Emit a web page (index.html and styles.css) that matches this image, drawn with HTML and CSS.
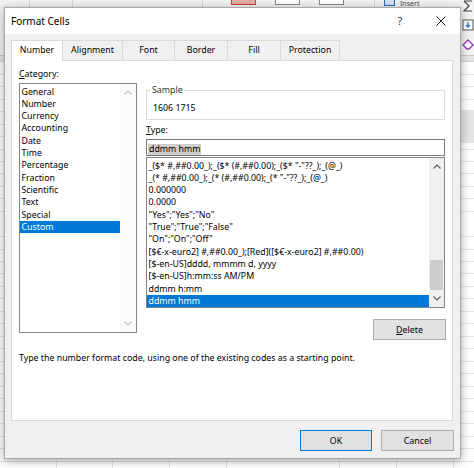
FILE: index.html
```html
<!DOCTYPE html>
<html lang="en">
<head>
<meta charset="utf-8">
<title>Format Cells</title>
<link rel="stylesheet" href="styles.css">
</head>
<body>
<div class="app">
  <div class="ribbon">
    <div class="rgroup g1"></div>
    <div class="rgroup g2"></div>
    <div class="rgroup g3"></div>
    <div class="rgroup g4">
      <span class="ricon red"></span>
      <span class="ricon grid"></span>
      <span class="ricon grid"></span>
    </div>
    <div class="rgroup g5"><span class="ricon blue"></span><span class="rtext">Insert</span></div>
    <div class="rside">
      <svg class="sicon" viewBox="0 0 12 12" width="12" height="12"><path d="M2 1h8M2 1l5 5-5 5h8" fill="none" stroke="#444" stroke-width="1.2"/></svg>
      <svg class="sicon" viewBox="0 0 12 12" width="12" height="12"><rect x="1" y="1" width="10" height="10" fill="#fff" stroke="#555"/><path d="M6 3v5M4 6l2 2 2-2" fill="none" stroke="#2b79d0" stroke-width="1.3"/></svg>
      <svg class="sicon" viewBox="0 0 12 12" width="12" height="12"><path d="M1 7l5-5 5 5-4 4H5z" fill="#fff" stroke="#9b3fbf" stroke-width="1.4"/></svg>
    </div>
  </div>
  <div class="colhead"></div>
  <div class="sheet"></div>
</div>

<div class="dialog">
  <div class="titlebar">
    <span class="title">Format Cells</span>
    <span class="help">?</span>
    <span class="close"><svg viewBox="0 0 10 10" width="10" height="10"><path d="M0.5 0.5l9 9M9.5 0.5l-9 9" stroke="#222" stroke-width="1" fill="none"/></svg></span>
  </div>
  <div class="body">
    <div class="tabs">
      <div class="tab active">Number</div>
      <div class="tab t2">Alignment</div>
      <div class="tab t3">Font</div>
      <div class="tab t4">Border</div>
      <div class="tab t5">Fill</div>
      <div class="tab t6">Protection</div>
    </div>
    <div class="panel">
      <div class="cols">
        <div class="left">
          <div class="lbl"><u>C</u>ategory:</div>
          <div class="listbox cat">
            <ul class="items">
              <li>General</li>
              <li>Number</li>
              <li>Currency</li>
              <li>Accounting</li>
              <li>Date</li>
              <li>Time</li>
              <li>Percentage</li>
              <li>Fraction</li>
              <li>Scientific</li>
              <li>Text</li>
              <li>Special</li>
              <li class="selected">Custom</li>
            </ul>
            <div class="vscroll off">
              <svg class="arr" viewBox="0 0 8 5" width="8" height="5"><path d="M0.5 4.5l3.5-3.5 3.5 3.5" fill="none" stroke="#c4c4c4" stroke-width="1.2"/></svg>
              <span class="track"></span>
              <svg class="arr" viewBox="0 0 8 5" width="8" height="5"><path d="M0.5 0.5l3.5 3.5 3.5-3.5" fill="none" stroke="#c4c4c4" stroke-width="1.2"/></svg>
            </div>
          </div>
        </div>
        <div class="right">
          <fieldset class="sample">
            <legend>Sample</legend>
            <div class="sval">1606 1715</div>
          </fieldset>
          <div class="lbl type"><u>T</u>ype:</div>
          <div class="input"><span class="sel">ddmm hmm</span></div>
          <div class="listbox codes">
            <ul class="items">
              <li>_($* #,##0.00_);_($* (#,##0.00);_($* "-"??_);_(@_)</li>
              <li>_(* #,##0.00_);_(* (#,##0.00);_(* "-"??_);_(@_)</li>
              <li>0.000000</li>
              <li>0.0000</li>
              <li>"Yes";"Yes";"No"</li>
              <li>"True";"True";"False"</li>
              <li>"On";"On";"Off"</li>
              <li>[$€-x-euro2] #,##0.00_);[Red]([$€-x-euro2] #,##0.00)</li>
              <li>[$-en-US]dddd, mmmm d, yyyy</li>
              <li>[$-en-US]h:mm:ss AM/PM</li>
              <li>ddmm h:mm</li>
              <li class="selected">ddmm hmm</li>
            </ul>
            <div class="vscroll on">
              <svg class="arr" viewBox="0 0 8 5" width="8" height="5"><path d="M0.5 4.5l3.5-3.5 3.5 3.5" fill="none" stroke="#606060" stroke-width="1.2"/></svg>
              <span class="track"><span class="thumb"></span></span>
              <svg class="arr" viewBox="0 0 8 5" width="8" height="5"><path d="M0.5 0.5l3.5 3.5 3.5-3.5" fill="none" stroke="#606060" stroke-width="1.2"/></svg>
            </div>
          </div>
          <div class="delrow"><button class="btn del"><u>D</u>elete</button></div>
        </div>
      </div>
      <p class="hint">Type the number format code, using one of the existing codes as a starting point.</p>
    </div>
    <div class="footer">
      <button class="btn ok">OK</button>
      <button class="btn cancel">Cancel</button>
    </div>
  </div>
</div>
</body>
</html>
```

FILE: styles.css
```css
* { box-sizing: border-box; }
html, body {
  margin: 0;
  padding: 0;
  width: 474px;
  height: 468px;
  overflow: hidden;
}
body {
  font-family: "Noto Sans", "Open Sans", "DejaVu Sans", sans-serif;
  font-size: 8.8px;
  color: #000;
  background: #fff;
  position: relative;
}

/* ---------- background application ---------- */
.app {
  display: flex;
  flex-direction: column;
  width: 474px;
  height: 468px;
}
.ribbon {
  height: 55px;
  background: #f3f3f3;
  display: flex;
  align-items: flex-start;
  flex: none;
}
.rgroup {
  height: 8px;
  border-right: 1px solid #d6d6d6;
  display: flex;
  align-items: flex-start;
  flex: none;
}
.g1 { width: 30px; }
.g2 { width: 43px; }
.g3 { width: 130px; }
.g4 { width: 172px; padding-left: 28px; gap: 19px; }
.g5 { width: 70px; border-right: none; padding-left: 9px; gap: 5px; }
.ricon {
  width: 25px;
  height: 5px;
  border: 1px solid #8a8a8a;
  border-top: none;
  background: #fff;
  flex: none;
}
.ricon.red { border-color: #c9453a; background: #e4a9a4; }
.ricon.blue { width: 11px; height: 6px; border-color: #2b6cb8; background: #cfe0f4; }
.rtext {
  font-size: 7px;
  line-height: 7px;
  color: #444;
}
.rside {
  margin-left: auto;
  width: 13px;
  display: flex;
  flex-direction: column;
  gap: 7px;
  align-items: center;
}
.sicon { display: block; }
.colhead {
  height: 7px;
  background: #e6e6e6;
  border-top: 1px solid #c8c8c8;
  border-bottom: 1px solid #d0d0d0;
  flex: none;
}
.sheet {
  flex: 1;
  background-color: #fff;
  background-image:
    linear-gradient(#e4e4e4, #e4e4e4),
    repeating-linear-gradient(to bottom, transparent 0 11.5px, #e2e2e2 11.5px 12.5px),
    repeating-linear-gradient(to right, transparent 0 55.7px, #e2e2e2 55.7px 56.7px);
  background-size: 13px 33px, auto, auto;
  background-position: right 0 top 48px, 0 0, 0 0;
  background-repeat: no-repeat, repeat, repeat;
}

/* ---------- dialog ---------- */
.dialog {
  position: absolute;
  left: 4px;
  top: 7px;
  width: 457px;
  height: 452px;
  background: #f0f0f0;
  border: 1px solid #a9a9a9;
  box-shadow: 0 2px 9px rgba(0, 0, 0, 0.35);
  display: flex;
  flex-direction: column;
}
.titlebar {
  height: 26px;
  background: #fff;
  display: flex;
  align-items: center;
  padding-left: 6px;
  flex: none;
}
.title {
  font-size: 10px;
  flex: 1;
  padding-bottom: 1px;
}
.help {
  font-size: 11px;
  color: #333;
  width: 12px;
  text-align: center;
  margin-right: 30px;
  padding-bottom: 1px;
}
.close {
  width: 10px;
  height: 10px;
  margin-right: 14px;
  display: flex;
}
.close svg { display: block; }

.body {
  flex: 1;
  padding: 6px 6px 0 6px;
  display: flex;
  flex-direction: column;
}
.tabs {
  display: flex;
  height: 20px;
  flex: none;
}
.tab {
  height: 20px;
  line-height: 19px;
  text-align: center;
  border: 1px solid #d9d9d9;
  border-left: none;
  border-bottom: none;
  background: #f0f0f0;
}
.tab.active {
  width: 52px;
  background: #fff;
  border-left: 1px solid #d9d9d9;
  position: relative;
  z-index: 1;
  height: 21px;
}
.t2 { width: 60px; }
.t3 { width: 52px; }
.t4 { width: 53px; }
.t5 { width: 53px; }
.t6 { width: 59px; }

.panel {
  width: 442px;
  height: 361px;
  background: #fff;
  border: 1px solid #d9d9d9;
  padding: 6px 7px 0 7px;
  flex: none;
}
.cols {
  display: grid;
  grid-template-columns: 118px 299px;
  column-gap: 9px;
  align-items: start;
}
.lbl {
  line-height: 14px;
  height: 14px;
}
.lbl u { text-decoration-thickness: 1px; text-underline-offset: 1px; }

.listbox {
  border: 1px solid #848484;
  background: #fff;
  display: flex;
  margin-top: 2px;
}
.listbox.cat { height: 250px; }
.listbox.codes { height: 151px; margin-top: 1px; }
.items {
  list-style: none;
  margin: 0;
  padding: 1.6px 0 0 0;
  flex: 1;
  min-width: 0;
  overflow: hidden;
}
.items li {
  height: 12.3px;
  line-height: 12.3px;
  padding-left: 1.5px;
  white-space: nowrap;
}
.items li.selected {
  background: #0078d7;
  color: #fff;
}
.vscroll {
  width: 16px;
  display: flex;
  flex-direction: column;
  align-items: center;
  flex: none;
}
.vscroll .arr { display: block; flex: none; margin: 6px 0; }
.vscroll .track { flex: 1; width: 100%; }
.vscroll.off { background: #fbfbfb; }
.vscroll.on { width: 15px; background: #f0f0f0; }
.vscroll.on .track { display: flex; flex-direction: column; justify-content: flex-end; }
.thumb {
  display: block;
  height: 30px;
  background: #cdcdcd;
  margin: 0 1px;
}

.right { margin-top: 17px; }
.sample {
  margin: 0;
  border: 1px solid #dcdcdc;
  padding: 0 5px 3px 5px;
  height: 36px;
}
.sample legend {
  padding: 0 1px;
  margin-left: -1px;
  line-height: 12px;
  color: #333;
}
.sval {
  line-height: 14px;
  padding-top: 5px;
  padding-left: 1px;
}
.lbl.type { margin-top: 3px; }
.input {
  margin-top: 2px;
  height: 17px;
  border: 1px solid #7a7a7a;
  background: #fff;
  padding: 3px 0 0 1px;
}
.sel {
  display: inline-block;
  height: 11px;
  line-height: 11px;
  background: #cccccc;
  padding: 0 1px;
}

.delrow {
  display: flex;
  justify-content: flex-end;
  margin-top: 11px;
  margin-right: -1px;
}
.btn {
  font-family: inherit;
  font-size: 8.8px;
  color: #000;
  background: #e1e1e1;
  border: 1px solid #adadad;
  height: 21px;
  padding: 0;
  margin: 0;
}
.btn.del { width: 73px; }
.btn u { text-decoration-thickness: 1px; text-underline-offset: 1px; }

.hint {
  margin: 11px 0 0 0;
  line-height: 14px;
}

.footer {
  display: flex;
  justify-content: flex-end;
  gap: 9px;
  margin-top: 9px;
}
.btn.ok {
  width: 72px;
  border-color: #0078d7;
}
.btn.cancel { width: 73px; }
```
